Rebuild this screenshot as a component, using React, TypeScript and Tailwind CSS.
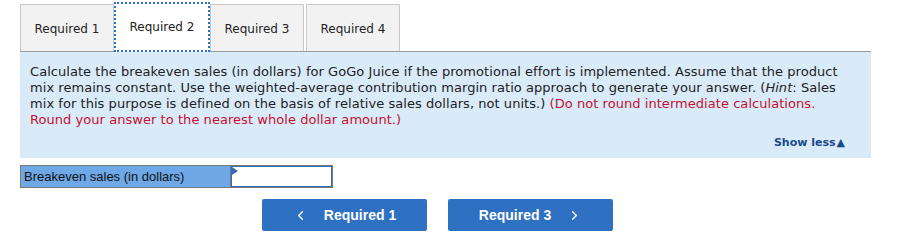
import { ChevronLeft, ChevronRight } from "lucide-react";

export default function App() {
  const tabs = ["Required 1", "Required 2", "Required 3", "Required 4"];

  return (
    <div className="w-[914px] h-[243px] bg-white font-['DejaVu_Sans',sans-serif] text-[#222]">
      <div className="ml-[20px] w-[851px]">
        <div className="flex items-end h-[51px] pt-[4px]">
          {tabs.map((t, i) =>
            i === 1 ? (
              <div
                key={t}
                className="w-[96px] h-[50px] -mt-[2px] bg-white border-2 border-dotted border-[#2f6fd0] flex items-center justify-center text-[12px] relative z-10 -mb-[1px]"
              >
                {t}
              </div>
            ) : (
              <div
                key={t}
                className={`w-[94px] h-[47px] bg-[#f2f2f2] border border-b-0 border-[#c8c8c8] flex items-center justify-center text-[12px] pt-[1px] ${i === 3 ? "ml-[2px]" : ""}`}
              >
                {t}
              </div>
            )
          )}
        </div>
        <div className="bg-[#d9ebf9] border-t border-[#9a9a9a] h-[107px] px-[10px] pt-[12px] relative">
          <p className="w-[815px] text-[13px] leading-[16px] tracking-[0.05px]">
            Calculate the breakeven sales (in dollars) for GoGo Juice if the promotional effort is implemented. Assume that the product mix remains constant. Use the weighted-average contribution margin ratio approach to generate your answer. (<i>Hint</i>: Sales mix for this purpose is defined on the basis of relative sales dollars, not units.){" "}
            <span className="text-[#c8102e]">
              (Do not round intermediate calculations. Round your answer to the nearest whole dollar amount.)
            </span>
          </p>
          <div className="absolute right-[26px] bottom-[7px] text-[11px] font-bold text-[#1a4a8c] flex items-center gap-[1px]">
            Show less
            <span className="text-[11px] leading-none">▲</span>
          </div>
        </div>
      </div>

      <div className="ml-[20px] mt-[7px] flex h-[23px] font-['Liberation_Sans',sans-serif]">
        <div className="w-[210px] bg-[#6fa8e6] border border-[#7a7a7a] border-r-0 text-[13px] text-[#111] flex items-center pl-[3px]">
          Breakeven sales (in dollars)
        </div>
        <div className="w-[103px] border border-[#7a7a7a] bg-white relative">
          <div className="w-full h-full border border-[#2f6db5] bg-white" />
          <div className="absolute left-[1px] top-[1px] w-0 h-0 border-t-[4px] border-b-[4px] border-l-[6px] border-t-transparent border-b-transparent border-l-[#2f6db5]" />
        </div>
      </div>

      <div className="mt-[11px] flex gap-[21px] pl-[262px] font-['Liberation_Sans',sans-serif]">
        <button className="w-[165px] h-[32px] bg-[#2e70c2] rounded-[2px] text-white font-bold text-[14px] flex items-center justify-center gap-[16px]">
          <ChevronLeft className="w-[15px] h-[15px]" strokeWidth={2.2} />
          Required 1
        </button>
        <button className="w-[165px] h-[32px] bg-[#2e70c2] rounded-[2px] text-white font-bold text-[14px] flex items-center justify-center gap-[16px]">
          Required 3
          <ChevronRight className="w-[15px] h-[15px]" strokeWidth={2.2} />
        </button>
      </div>
    </div>
  );
}
